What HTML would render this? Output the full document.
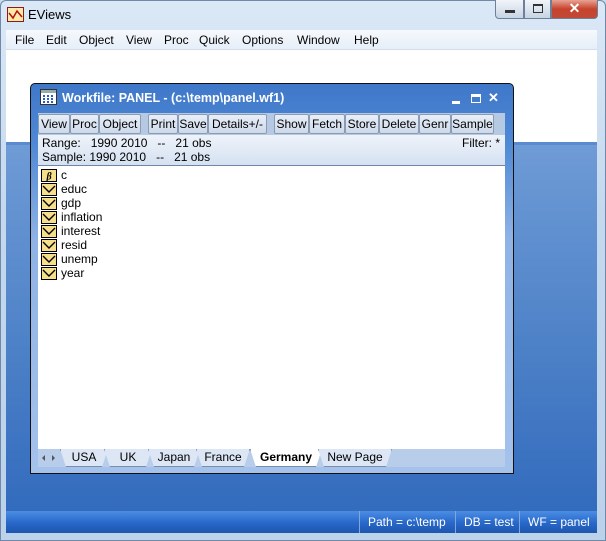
<!DOCTYPE html>
<html><head><meta charset="utf-8">
<style>
*{margin:0;padding:0;box-sizing:border-box}
body{width:606px;height:541px;overflow:hidden;position:relative;font-family:"Liberation Sans",sans-serif;font-size:12px;background:#c9dcf0}
.a{position:absolute}
.frame{left:0;top:0;width:606px;height:541px;background:linear-gradient(#dbe8f6,#c4d8ee 40%,#bcd2ea);border:1px solid #6f8aa8;border-radius:6px 6px 0 0}
.menu{left:6px;top:30px;width:591px;height:20px;background:linear-gradient(#f6f9fd,#e6eef8);border-bottom:1px solid #d2dceb}
.menu span{position:absolute;top:3px;font-size:12px;color:#000}
.white{left:6px;top:50px;width:591px;height:92px;background:#fff}
.desk{left:6px;top:142px;width:591px;height:369px;background:linear-gradient(#6f9bd6,#4a7fc6 60%,#336bbd);border-top:3px solid #5a8bd0}
.status{left:6px;top:511px;width:591px;height:22px;background:linear-gradient(#4c8ee4,#2a6acb 50%,#1d55ae)}
.status span{position:absolute;top:4px;color:#fff;font-size:12px}
.sep{position:absolute;top:0;width:1px;height:22px;background:#7fa6de}
.wbtn{top:0;height:19px;border:1px solid #6d7f99;border-top:none}
.win{left:30px;top:83px;width:484px;height:391px;background:linear-gradient(#3f78c9,#4f88d4 15%,#8fb3e6 40%,#a5c2ec);border:1px solid #111;border-radius:5px 5px 0 0}
.tb{left:38px;top:113px;width:467px;height:22px;background:#b6c9e3}
.btn{position:absolute;top:1px;height:20px;background:linear-gradient(#e9eff8,#cdd9ea);border:1px solid #8a9bb4;border-radius:2px;font-size:12px;text-align:center;line-height:18px;color:#000}
.info{left:38px;top:135px;width:467px;height:31px;background:linear-gradient(#eef3fa,#d5e1f1);border-bottom:1px solid #6f86a6}
.list{left:38px;top:166px;width:467px;height:283px;background:#fff}
.item{position:absolute;left:3px;height:14px;font-size:12px;line-height:14px;display:flex;align-items:center}
.item svg{margin-right:4px;flex:none}
.tabs{left:38px;top:449px;width:467px;height:18px;background:#b8cde9}
.tab{position:absolute;top:0;height:18px;font-size:12px;line-height:17px;text-align:center;background:#dce6f4;border:1px solid #7a8ea8;border-top:none;clip-path:polygon(0 0,100% 0,calc(100% - 6px) 100%,6px 100%)}
</style></head><body>
<div class="a frame"></div>
<div class="a" style="left:7px;top:7px;width:17px;height:15px;border:1px solid #8b1a1a;background:#ffe9a8"></div>
<svg class="a" style="left:7px;top:7px" width="17" height="15"><polyline points="2,6 6,11 10,4 15,10" fill="none" stroke="#b01010" stroke-width="1.5"/></svg>
<div class="a" style="left:28px;top:7px;font-size:13px">EViews</div>
<div class="a wbtn" style="left:495px;width:29px;background:linear-gradient(#f1f5fa,#c7d4e4);border-radius:0 0 0 4px"><div class="a" style="left:9px;top:10px;width:10px;height:3px;background:#333"></div></div>
<div class="a wbtn" style="left:524px;width:27px;background:linear-gradient(#f1f5fa,#c7d4e4)"><div class="a" style="left:8px;top:4px;width:10px;height:9px;border:1px solid #333;border-top-width:2px"></div></div>
<div class="a wbtn" style="left:551px;width:47px;background:linear-gradient(#e8a294,#c7432c 50%,#c04a35);border-radius:0 0 4px 0;color:#fff;font-weight:bold;text-align:center;font-size:14px;line-height:17px">✕</div>
<div class="a menu">
<span style="left:9px">File</span><span style="left:40px">Edit</span><span style="left:73px">Object</span><span style="left:120px">View</span><span style="left:158px">Proc</span><span style="left:193px">Quick</span><span style="left:236px">Options</span><span style="left:291px">Window</span><span style="left:348px">Help</span>
</div>
<div class="a white"></div>
<div class="a desk"></div>
<div class="a status">
<div class="sep" style="left:353px"></div><span style="left:362px">Path = c:\temp</span>
<div class="sep" style="left:449px"></div><span style="left:458px">DB = test</span>
<div class="sep" style="left:513px"></div><span style="left:522px">WF = panel</span>
</div>

<div class="a win"></div>
<svg class="a" style="left:40px;top:89px" width="17" height="16"><rect x="0.5" y="0.5" width="16" height="15" fill="#fff" stroke="#333"/><rect x="1" y="1" width="15" height="3" fill="#9aa"/><g fill="#2a5cc8"><rect x="3" y="6" width="2" height="2"/><rect x="7" y="6" width="2" height="2"/><rect x="11" y="6" width="2" height="2"/><rect x="3" y="9" width="2" height="2"/><rect x="7" y="9" width="2" height="2"/><rect x="11" y="9" width="2" height="2"/><rect x="3" y="12" width="2" height="2"/><rect x="7" y="12" width="2" height="2"/><rect x="11" y="12" width="2" height="2"/></g></svg>
<div class="a" style="left:62px;top:91px;color:#fff;font-weight:bold;font-size:12.5px">Workfile: PANEL - (c:\temp\panel.wf1)</div>
<div class="a" style="left:452px;top:101px;width:8px;height:3px;background:#fff"></div>
<div class="a" style="left:471px;top:94px;width:10px;height:9px;border:1px solid #fff;border-top-width:3px"></div>
<div class="a" style="left:488px;top:90px;color:#fff;font-weight:bold;font-size:13px">✕</div>

<div class="a tb">
<div class="btn" style="left:0;width:32px">View</div>
<div class="btn" style="left:32px;width:29px">Proc</div>
<div class="btn" style="left:61px;width:42px">Object</div>
<div class="btn" style="left:110px;width:30px">Print</div>
<div class="btn" style="left:140px;width:30px">Save</div>
<div class="btn" style="left:170px;width:59px">Details+/-</div>
<div class="btn" style="left:236px;width:35px">Show</div>
<div class="btn" style="left:271px;width:36px">Fetch</div>
<div class="btn" style="left:307px;width:34px">Store</div>
<div class="btn" style="left:341px;width:40px">Delete</div>
<div class="btn" style="left:381px;width:32px">Genr</div>
<div class="btn" style="left:413px;width:43px">Sample</div>
</div>
<div class="a info">
<div class="a" style="left:4px;top:1px">Range:&nbsp;&nbsp; 1990 2010&nbsp;&nbsp; --&nbsp;&nbsp; 21 obs</div>
<div class="a" style="left:4px;top:15px">Sample: 1990 2010&nbsp;&nbsp; --&nbsp;&nbsp; 21 obs</div>
<div class="a" style="left:424px;top:1px">Filter: *</div>
</div>
<div class="a list">
<div class="item" style="top:2px"><svg width="16" height="13"><rect x="0.5" y="0.5" width="15" height="12" fill="#f5df8a" stroke="#000"/><text x="8" y="10.5" text-anchor="middle" font-size="10" font-weight="bold" font-style="italic" font-family="Liberation Serif,serif">β</text></svg>c</div>
<div class="item" style="top:16px"><svg width="16" height="13"><rect x="0.5" y="0.5" width="15" height="12" fill="#f5df8a" stroke="#000"/><polyline points="2,3 8,9 14,3" fill="none" stroke="#000" stroke-width="1.4"/></svg>educ</div>
<div class="item" style="top:30px"><svg width="16" height="13"><rect x="0.5" y="0.5" width="15" height="12" fill="#f5df8a" stroke="#000"/><polyline points="2,3 8,9 14,3" fill="none" stroke="#000" stroke-width="1.4"/></svg>gdp</div>
<div class="item" style="top:44px"><svg width="16" height="13"><rect x="0.5" y="0.5" width="15" height="12" fill="#f5df8a" stroke="#000"/><polyline points="2,3 8,9 14,3" fill="none" stroke="#000" stroke-width="1.4"/></svg>inflation</div>
<div class="item" style="top:58px"><svg width="16" height="13"><rect x="0.5" y="0.5" width="15" height="12" fill="#f5df8a" stroke="#000"/><polyline points="2,3 8,9 14,3" fill="none" stroke="#000" stroke-width="1.4"/></svg>interest</div>
<div class="item" style="top:72px"><svg width="16" height="13"><rect x="0.5" y="0.5" width="15" height="12" fill="#f5df8a" stroke="#000"/><polyline points="2,3 8,9 14,3" fill="none" stroke="#000" stroke-width="1.4"/></svg>resid</div>
<div class="item" style="top:86px"><svg width="16" height="13"><rect x="0.5" y="0.5" width="15" height="12" fill="#f5df8a" stroke="#000"/><polyline points="2,3 8,9 14,3" fill="none" stroke="#000" stroke-width="1.4"/></svg>unemp</div>
<div class="item" style="top:100px"><svg width="16" height="13"><rect x="0.5" y="0.5" width="15" height="12" fill="#f5df8a" stroke="#000"/><polyline points="2,3 8,9 14,3" fill="none" stroke="#000" stroke-width="1.4"/></svg>year</div>
</div>
<div class="a tabs">
<svg class="a" style="left:2px;top:4px" width="18" height="10"><polygon points="5,2 2,5 5,8" fill="#555"/><polygon points="12,2 15,5 12,8" fill="#555"/></svg>
<div class="tab" style="left:22px;width:48px">USA</div>
<div class="tab" style="left:66px;width:48px">UK</div>
<div class="tab" style="left:110px;width:52px">Japan</div>
<div class="tab" style="left:158px;width:54px">France</div>
<div class="tab" style="left:212px;width:72px;background:#fff;font-weight:bold">Germany</div>
<div class="tab" style="left:280px;width:74px">New Page</div>
</div>
</body></html>
